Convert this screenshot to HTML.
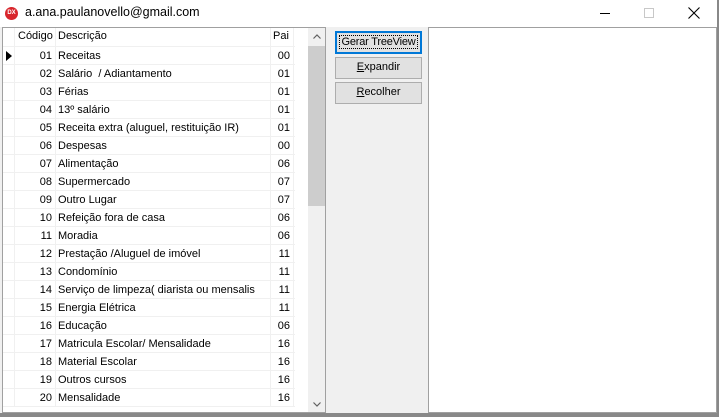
<!DOCTYPE html>
<html><head><style>
*{margin:0;padding:0;box-sizing:border-box}
body{width:719px;height:417px;background:#f0f0f0;font-family:"Liberation Sans","DejaVu Sans",sans-serif;font-size:11px;position:relative;overflow:hidden;color:#000}
.abs{position:absolute}
.title{left:0;top:0;width:719px;height:27px;background:#fff}
.grid{left:2px;top:27px;width:324px;height:386px;background:#fff;border:1px solid #a0a0a0;overflow:hidden}
.row{position:absolute;left:0;height:18px;width:292px;border-bottom:1px solid #f0f0f0}
.c{position:absolute;top:0;height:18px;line-height:18px;border-right:1px solid #f0f0f0;white-space:pre;overflow:hidden}
.btn{position:absolute;left:335px;width:87px;background:#e1e1e1;border:1px solid #adadad;text-align:center;font-size:11px;line-height:19px}
</style></head><body>
<div class="abs title">
 <div class="abs" style="left:5px;top:7px;width:13px;height:13px;border-radius:50%;background:#d8262c;color:#fff;font-size:6px;line-height:13px;text-align:center;font-weight:bold">DX</div>
 <div class="abs" style="left:25px;top:5px;font-size:12.5px">a.ana.paulanovello@gmail.com</div>
 <div class="abs" style="left:600px;top:13px;width:10px;height:1px;background:#000"></div>
 <div class="abs" style="left:644px;top:8px;width:10px;height:10px;border:1px solid #c8c8c8"></div>
 <svg class="abs" style="left:688px;top:7px" width="12" height="12"><path d="M0.5 0.5L11.5 11.5M11.5 0.5L0.5 11.5" stroke="#000" stroke-width="1.1"/></svg>
</div>
<div class="abs grid">
 <div class="row" style="top:0;height:19px;border-bottom:1px solid #f0f0f0">
  <div class="c" style="left:0;width:12px;height:19px"></div>
  <div class="c" style="left:12px;width:41px;padding-left:3px;height:19px;line-height:16px">Código</div>
  <div class="c" style="left:53px;width:215px;padding-left:2px;height:19px;line-height:16px">Descrição</div>
  <div class="c" style="left:268px;width:23px;padding-left:2px;height:19px;line-height:16px">Pai</div>
 </div>
 <div id="rows"></div>
 <div class="abs" style="left:305px;top:0;width:18px;height:384px;background:#f0f0f0"></div>
 <div class="abs" style="left:305px;top:18px;width:18px;height:160px;background:#cdcdcd"></div>
 <svg class="abs" style="left:310px;top:6px" width="8" height="5"><path d="M0.5 4.5L4 1L7.5 4.5" stroke="#606060" fill="none" stroke-width="1.2"/></svg>
 <svg class="abs" style="left:310px;top:374px" width="8" height="5"><path d="M0.5 0.5L4 4L7.5 0.5" stroke="#606060" fill="none" stroke-width="1.2"/></svg>
</div>
<div class="btn" style="top:31px;height:23px;border:2px solid #0078d7;line-height:18px;letter-spacing:-0.2px"><span style="outline:1px dotted #000;padding:0 1px">Gerar TreeView</span></div>
<div class="btn" style="top:57px;height:22px"><u>E</u>xpandir</div>
<div class="btn" style="top:82px;height:22px"><u>R</u>ecolher</div>
<div class="abs" style="left:428px;top:27px;width:289px;height:386px;background:#fff;border:1px solid #a0a0a0"></div>
<div class="abs" style="left:717px;top:0;width:2px;height:417px;background:#888"></div>
<div class="abs" style="left:0;top:413px;width:719px;height:4px;background:#888"></div>
<script>
var d=[["01","Receitas","00"],["02","Salário  / Adiantamento","01"],["03","Férias","01"],["04","13º salário","01"],["05","Receita extra (aluguel, restituição IR)","01"],["06","Despesas","00"],["07","Alimentação","06"],["08","Supermercado","07"],["09","Outro Lugar","07"],["10","Refeição fora de casa","06"],["11","Moradia","06"],["12","Prestação /Aluguel de imóvel","11"],["13","Condomínio","11"],["14","Serviço de limpeza( diarista ou mensalis","11"],["15","Energia Elétrica","11"],["16","Educação","06"],["17","Matricula Escolar/ Mensalidade","16"],["18","Material Escolar","16"],["19","Outros cursos","16"],["20","Mensalidade","16"]];
var h="";
d.forEach(function(r,i){h+='<div class="row" style="top:'+(19+i*18)+'px"><div class="c" style="left:0;width:12px">'+(i==0?'<svg style="position:absolute;left:3px;top:4px" width="6" height="10"><path d="M0 0L6 5L0 10Z" fill="#000"/></svg>':'')+'</div><div class="c" style="left:12px;width:41px;text-align:right;padding-right:3px">'+r[0]+'</div><div class="c" style="left:53px;width:215px;padding-left:2px">'+r[1]+'</div><div class="c" style="left:268px;width:23px;text-align:right;padding-right:3px">'+r[2]+'</div></div>';});
document.getElementById("rows").outerHTML=h;
</script>
</body></html>
